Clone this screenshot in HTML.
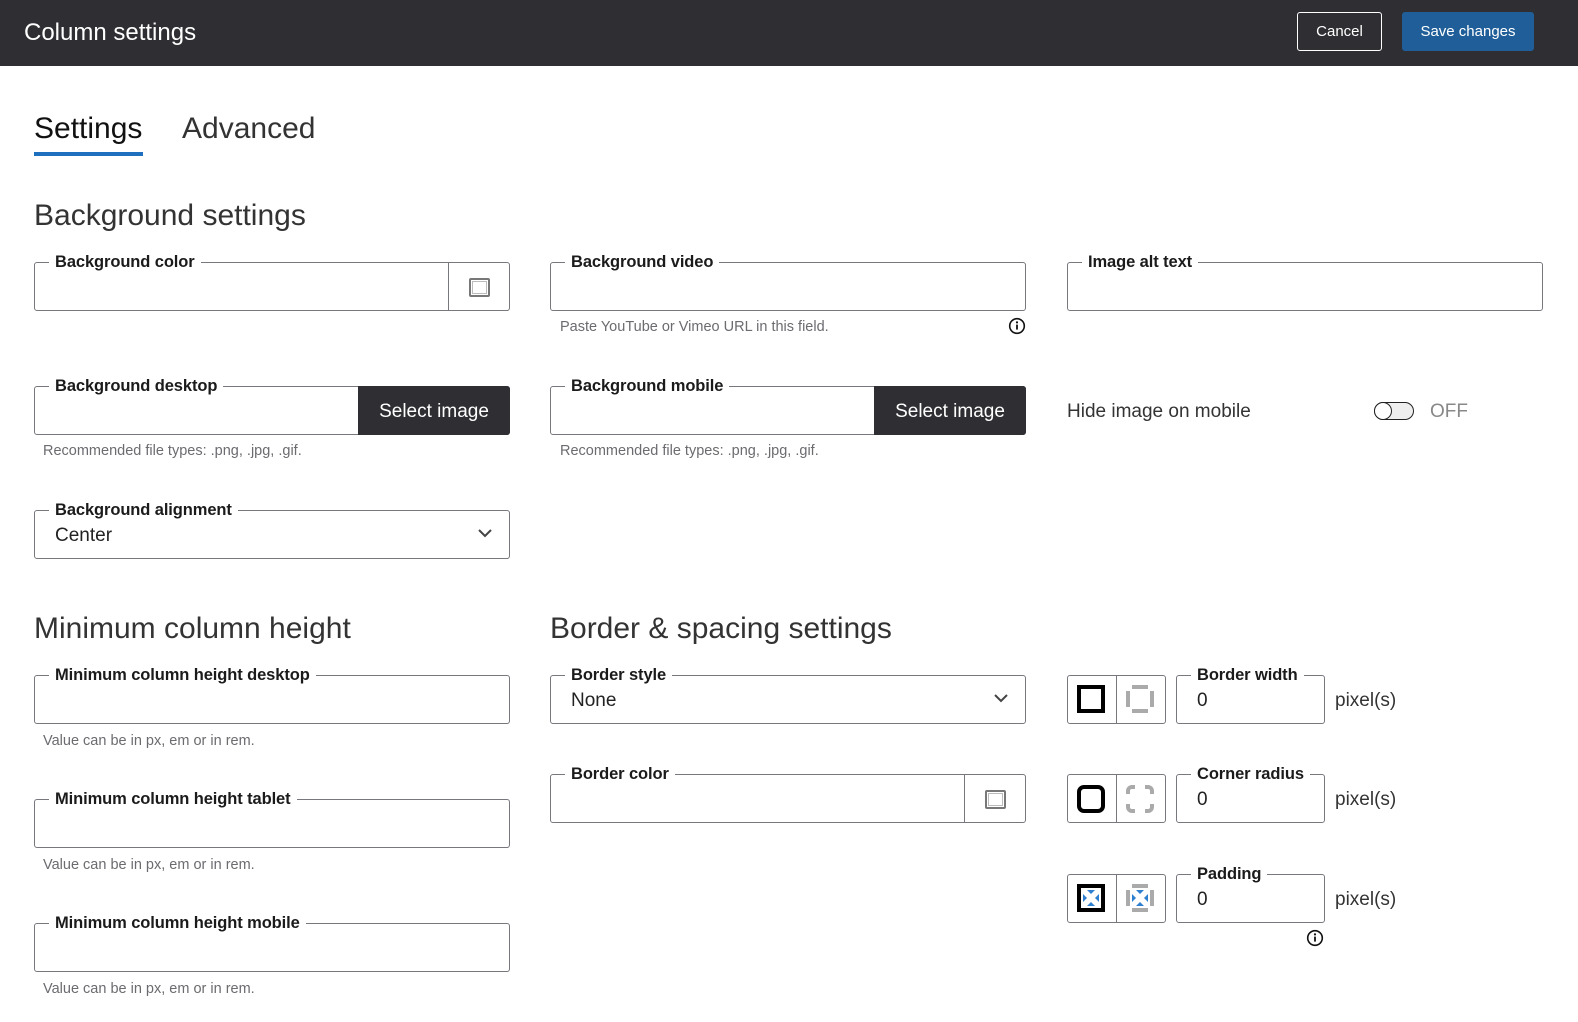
<!DOCTYPE html>
<html><head><meta charset="utf-8"><style>
*{box-sizing:border-box;margin:0;padding:0}
body{width:1578px;height:1022px;position:relative;background:#fff;font-family:"Liberation Sans",sans-serif;color:#222;overflow:hidden}
.a{position:absolute}
.hdr{left:0;top:0;width:1578px;height:66px;background:#2e2e33}
.f{position:absolute;border:1px solid #77777e;border-radius:3px;height:49px;background:#fff}
.f>.l{position:absolute;top:-12px;left:14px;background:#fff;padding:0 6px;font-size:16.5px;font-weight:bold;color:#1b1b1b;line-height:22px;white-space:nowrap;letter-spacing:-0.1px}
.f>.v{position:absolute;left:20px;top:14px;font-size:19px;color:#222}
.h{position:absolute;font-size:30px;color:#333;font-weight:300;white-space:nowrap}
.help{position:absolute;font-size:14.5px;color:#6b6b70;white-space:nowrap}
.sel{position:absolute;right:-1px;top:-1px;bottom:-1px;width:152px;background:#2e2e33;color:#fff;font-size:19px;border-radius:0 3px 3px 0;text-align:center;line-height:51px}
.sw{position:absolute;right:0;top:0;bottom:0;width:61px;border-left:1px solid #77777e}
.sw i{position:absolute;left:20px;top:15px;width:21px;height:19px;border:2px solid #777;border-radius:2px;box-shadow:inset 0 0 0 1px #fff,inset 0 0 0 2px #bbb}
.chev{position:absolute;right:16px;top:14px}
.grp{position:absolute;width:99px;height:49px;border:1px solid #77777e;border-radius:3px}
.grp .d{position:absolute;left:48px;top:0;bottom:0;border-left:1px solid #77777e}
.px{position:absolute;font-size:19px;color:#333}
</style></head><body>
<div class="a hdr"></div>
<div class="a" style="left:24px;top:19px;font-size:24px;color:#fff">Column settings</div>
<div class="a" style="left:1297px;top:12px;width:85px;height:39px;border:1px solid #fff;border-radius:3px;color:#fff;font-size:15px;text-align:center;line-height:37px">Cancel</div>
<div class="a" style="left:1402px;top:12px;width:132px;height:39px;background:#1f5e98;border-radius:3px;color:#fff;font-size:15px;text-align:center;line-height:39px">Save changes</div>

<div class="a" style="left:34px;top:112px;font-size:30px;color:#111">Settings</div>
<div class="a" style="left:34px;top:152px;width:109px;height:4px;background:#1f6fbf"></div>
<div class="a" style="left:182px;top:112px;font-size:30px;color:#333">Advanced</div>

<div class="h" style="left:34px;top:199px">Background settings</div>

<div class="f" style="left:34px;top:262px;width:476px"><span class="l">Background color</span><div class="sw"><i></i></div></div>
<div class="f" style="left:550px;top:262px;width:476px"><span class="l">Background video</span></div>
<div class="help" style="left:560px;top:319px">Paste YouTube or Vimeo URL in this field.</div>
<svg class="a" style="left:1008px;top:317px" width="18" height="18" viewBox="0 0 18 18"><circle cx="9" cy="9" r="7.3" fill="none" stroke="#111" stroke-width="1.6"/><rect x="8.1" y="7.6" width="1.8" height="5" fill="#111"/><circle cx="9" cy="5.4" r="1.1" fill="#111"/></svg>
<div class="f" style="left:1067px;top:262px;width:476px"><span class="l">Image alt text</span></div>

<div class="f" style="left:34px;top:386px;width:476px"><span class="l">Background desktop</span><div class="sel">Select image</div></div>
<div class="help" style="left:43px;top:443px">Recommended file types: .png, .jpg, .gif.</div>
<div class="f" style="left:550px;top:386px;width:476px"><span class="l">Background mobile</span><div class="sel">Select image</div></div>
<div class="help" style="left:560px;top:443px">Recommended file types: .png, .jpg, .gif.</div>
<div class="a" style="left:1067px;top:401px;font-size:19px;color:#333">Hide image on mobile</div>
<div class="a" style="left:1374px;top:402px;width:40px;height:18px;border:1.5px solid #222;border-radius:9px;background:#eee"></div>
<div class="a" style="left:1374px;top:402px;width:18px;height:18px;border:1.5px solid #222;border-radius:50%;background:#fff"></div>
<div class="a" style="left:1430px;top:401px;font-size:19px;color:#888">OFF</div>

<div class="f" style="left:34px;top:510px;width:476px"><span class="l">Background alignment</span><span class="v">Center</span>
<svg class="chev" width="16" height="16" viewBox="0 0 16 16"><path d="M2 5l6 6 6-6" fill="none" stroke="#444" stroke-width="2"/></svg></div>

<div class="h" style="left:34px;top:612px">Minimum column height</div>
<div class="h" style="left:550px;top:612px">Border &amp; spacing settings</div>

<div class="f" style="left:34px;top:675px;width:476px"><span class="l">Minimum column height desktop</span></div>
<div class="help" style="left:43px;top:733px">Value can be in px, em or in rem.</div>
<div class="f" style="left:34px;top:799px;width:476px"><span class="l">Minimum column height tablet</span></div>
<div class="help" style="left:43px;top:857px">Value can be in px, em or in rem.</div>
<div class="f" style="left:34px;top:923px;width:476px"><span class="l">Minimum column height mobile</span></div>
<div class="help" style="left:43px;top:981px">Value can be in px, em or in rem.</div>

<div class="f" style="left:550px;top:675px;width:476px"><span class="l">Border style</span><span class="v">None</span>
<svg class="chev" width="16" height="16" viewBox="0 0 16 16"><path d="M2 5l6 6 6-6" fill="none" stroke="#444" stroke-width="2"/></svg></div>
<div class="f" style="left:550px;top:774px;width:476px"><span class="l">Border color</span><div class="sw"><i></i></div></div>

<div class="grp" style="left:1067px;top:675px"><div class="d"></div></div>
<svg class="a" style="left:1077px;top:685px" width="28" height="28"><rect x="2" y="2" width="24" height="24" fill="none" stroke="#000" stroke-width="4"/></svg>
<svg class="a" style="left:1126px;top:685px" width="28" height="28" fill="#aaa"><rect x="6" y="0" width="16" height="4"/><rect x="6" y="24" width="16" height="4"/><rect x="0" y="6" width="4" height="16"/><rect x="24" y="6" width="4" height="16"/></svg>
<div class="f" style="left:1176px;top:675px;width:149px"><span class="l">Border width</span><span class="v">0</span></div>
<div class="px" style="left:1335px;top:690px">pixel(s)</div>

<div class="grp" style="left:1067px;top:774px"><div class="d"></div></div>
<svg class="a" style="left:1077px;top:785px" width="28" height="28"><rect x="2" y="2" width="24" height="24" rx="5" fill="none" stroke="#000" stroke-width="4"/></svg>
<svg class="a" style="left:1126px;top:785px" width="28" height="28" fill="none" stroke="#aaa" stroke-width="4"><path d="M2 9V6a4 4 0 0 1 4-4h3M19 2h3a4 4 0 0 1 4 4v3M26 19v3a4 4 0 0 1-4 4h-3M9 26H6a4 4 0 0 1-4-4v-3"/></svg>
<div class="f" style="left:1176px;top:774px;width:149px"><span class="l">Corner radius</span><span class="v">0</span></div>
<div class="px" style="left:1335px;top:789px">pixel(s)</div>

<div class="grp" style="left:1067px;top:874px"><div class="d"></div></div>
<svg class="a" style="left:1077px;top:884px" width="28" height="28"><rect x="2" y="2" width="24" height="24" fill="#fff" stroke="#000" stroke-width="4"/><g fill="#2d7fd0"><path d="M10 6h8l-4 4z"/><path d="M10 22h8l-4-4z"/><path d="M6 10v8l4-4z"/><path d="M22 10v8l-4-4z"/></g></svg>
<svg class="a" style="left:1126px;top:884px" width="28" height="28"><g fill="#aaa"><rect x="6" y="0" width="16" height="4"/><rect x="6" y="24" width="16" height="4"/><rect x="0" y="6" width="4" height="16"/><rect x="24" y="6" width="4" height="16"/></g><g fill="#2d7fd0"><path d="M10 6h8l-4 4z"/><path d="M10 22h8l-4-4z"/><path d="M6 10v8l4-4z"/><path d="M22 10v8l-4-4z"/></g></svg>
<div class="f" style="left:1176px;top:874px;width:149px"><span class="l">Padding</span><span class="v">0</span></div>
<div class="px" style="left:1335px;top:889px">pixel(s)</div>
<svg class="a" style="left:1306px;top:929px" width="18" height="18" viewBox="0 0 18 18"><circle cx="9" cy="9" r="7.3" fill="none" stroke="#111" stroke-width="1.6"/><rect x="8.1" y="7.6" width="1.8" height="5" fill="#111"/><circle cx="9" cy="5.4" r="1.1" fill="#111"/></svg>
</body></html>
